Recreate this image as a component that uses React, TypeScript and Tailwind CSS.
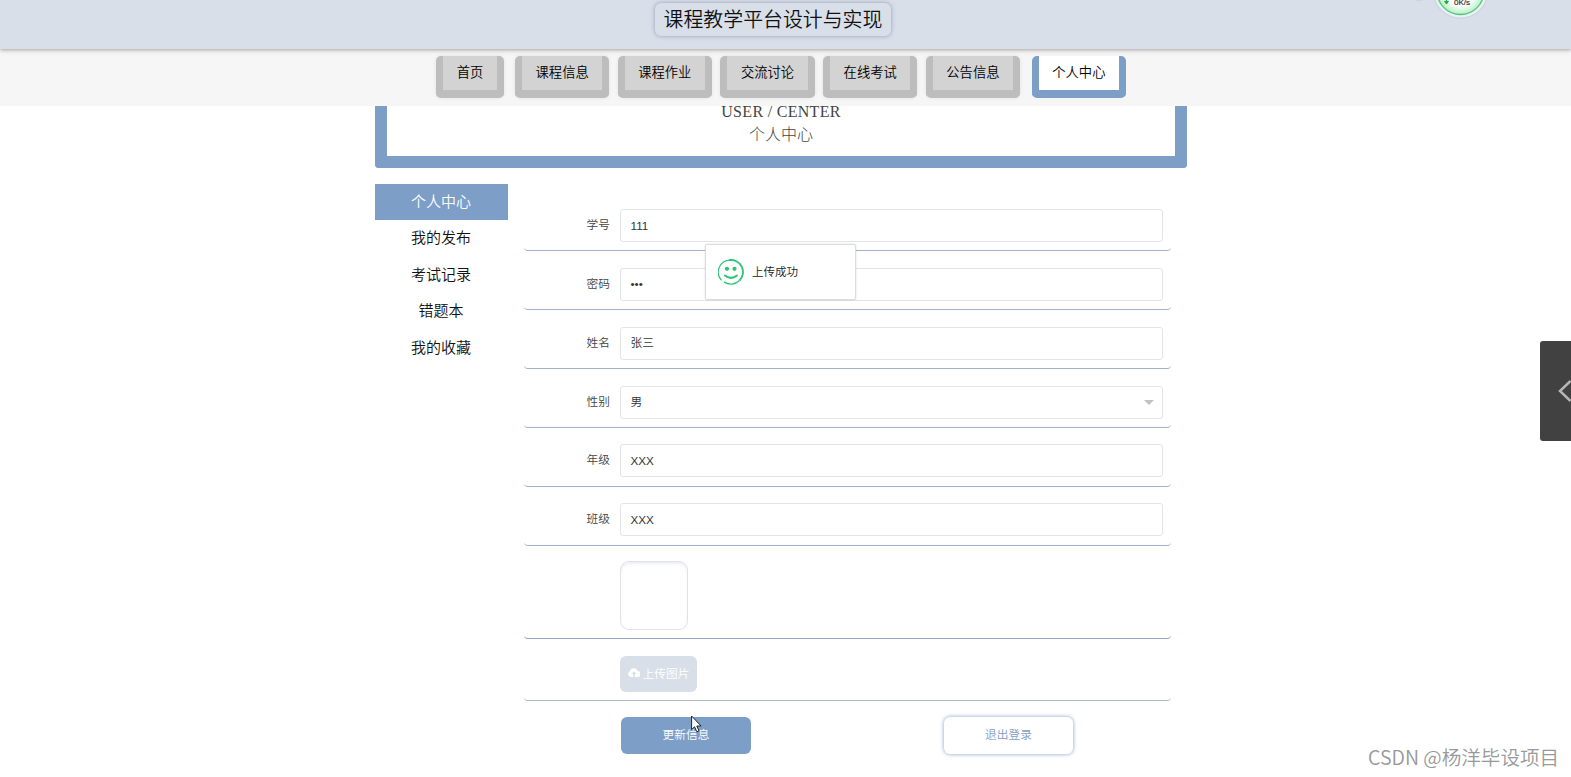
import React from 'react';

const navItems = ['课程信息', '课程作业', '交流讨论', '在线考试', '公告信息'];

const menuItems = ['我的发布', '考试记录', '错题本', '我的收藏'];

const fields = [
  { label: '学号', value: '111' },
  { label: '密码', value: '•••' },
  { label: '姓名', value: '张三' },
  { label: '性别', value: '男', select: true },
  { label: '年级', value: 'XXX' },
  { label: '班级', value: 'XXX' },
];

const Header: React.FC = () => (
  <header className="relative z-10 h-[49px] bg-[#d8dfe9] shadow-[0_1px_4px_rgba(90,70,70,0.5)] flex items-start">
    <h1 className="mt-[3px] ml-[655px] w-[236px] h-[33px] rounded-md text-center text-[19.9px] leading-[32px] font-[350] text-[#111] shadow-[0_0_4px_rgba(80,90,130,0.5)] whitespace-nowrap">
      课程教学平台设计与实现
    </h1>

    {/* Network speed ball */}
    <svg className="absolute left-[1406px] top-0" width="90" height="26" viewBox="0 0 90 26">
      <defs>
        <radialGradient id="ball" cx="0.5" cy="0.5" r="0.5">
          <stop offset="0.6" stopColor="#ffffff" />
          <stop offset="1" stopColor="#b6f0c4" />
        </radialGradient>
      </defs>
      <circle cx="13" cy="-12" r="13" fill="#cbd2de" />
      <circle cx="54.500" cy="-9" r="28" fill="#c9d0dc" opacity="0.6" />
      <circle cx="54.500" cy="-9" r="26.500" fill="#eaf0f3" />
      <circle cx="54.500" cy="-9" r="23.500" fill="url(#ball)" stroke="#4bc67c" strokeWidth="1.300" />
      <path d="M40.500 -1v4M38.500 1.300h4l-2 2.800z" fill="#22a045" stroke="#22a045" strokeWidth="0.900" />
      <text x="48" y="4.500" fontSize="8" fontFamily="Liberation Sans" fill="#333" stroke="#333" strokeWidth="0.200">0K/s</text>
    </svg>
  </header>
);

const Nav: React.FC = () => (
  <nav className="h-[57px] bg-[#f6f6f6] flex items-start pl-[436px] pt-[7px] text-[13.3px] leading-[32px] text-center text-black">
    <a className="w-[68px] h-[42px] mr-[11px] rounded-[5px] bg-[#d3d3d3] border-[#bdbdbd] border-x-7 border-b-8 shadow-[0_0_4px_rgba(0,0,0,0.08)]">首页</a>
    {navItems.map((item) => (
      <a key={item} className="w-[94.300px] h-[42px] mr-[8.400px] rounded-[5px] bg-[#d3d3d3] border-[#bdbdbd] border-x-7 border-b-8 shadow-[0_0_4px_rgba(0,0,0,0.08)]">
        {item}
      </a>
    ))}
    <a className="w-[94.300px] h-[42px] ml-[3.300px] rounded-[5px] bg-white border-[#7d9ec7] border-x-7 border-b-8">个人中心</a>
  </nav>
);

const SmileIcon: React.FC = () => (
  <svg width="26" height="26" viewBox="0 0 26 26" fill="none" stroke="#2fc476">
    <path d="M3.500 21.300A12 12 0 0 1 12 1.100" strokeWidth="1.200" />
    <path d="M11 1.200A12 12 0 0 1 21.500 21.500" strokeWidth="1.800" />
    <path d="M21.500 21.500A12 12 0 0 1 6 22.900" strokeWidth="1.300" />
    <path d="M7 16.500q6 4.800 12 0" strokeWidth="2" strokeLinecap="round" />
    <circle cx="9" cy="9.800" r="2.100" fill="#2fc476" stroke="none" />
    <circle cx="16.500" cy="9.800" r="2.100" fill="#2fc476" stroke="none" />
  </svg>
);

const App: React.FC = () => {
  return (
    <div className="relative w-[1571px] h-[777px] overflow-hidden bg-white font-['Noto_Sans_CJK_SC',sans-serif] font-[350]">
      <Header />
      <Nav />

      <main className="ml-[375px] w-[812px]">
        <div className="h-[62px] flex flex-col rounded-b-[4px] border-x-12 border-b-12 border-[#7d9ec7] text-center">
          <p className="-mt-[6px] h-[22px] leading-[24px] text-[16px] tracking-[0.3px] text-[#444] font-['Liberation_Serif',serif]">USER / CENTER</p>
          <p className="leading-[22px] text-[16px] text-[#444] font-light">个人中心</p>
        </div>

        <div className="flex">
          <ul className="mt-[16px] w-[133px] pr-px text-center text-[15px] text-[#111]">
            <li className="h-[37px] leading-[34px] -mr-px"><span className="block h-[36px] pr-px bg-[#7d9ec7] text-white">个人中心</span></li>
            {menuItems.map((item) => (
              <li key={item} className="h-[36.700px] leading-[32px]">{item}</li>
            ))}
          </ul>

          <form className="ml-4 mt-[24.500px] w-[647px] text-[11.700px] text-[#444]">
            {fields.map((field) => (
              <div key={field.label} className="h-[58.850px] pt-[16.500px] flex rounded-[4px] border-b border-[#9db3cb]">
                <label className="w-[86px] mr-[10px] text-right leading-[30px]">{field.label}</label>
                <div className="w-[543px] h-[33px] pl-[9.500px] pr-[8px] flex items-center justify-between rounded-[3px] border border-[#e3e4e8] text-[#333]">
                  <span className="font-['Liberation_Sans','Noto_Sans_CJK_SC',sans-serif] leading-[16px]">{field.value}</span>
                  {field.select && (
                    <svg width="10" height="5" viewBox="0 0 10 5" fill="#c2c2c2">
                      <path d="M0 0h10l-5 5z" />
                    </svg>
                  )}
                </div>
              </div>
            ))}

            <div className="h-[93px] pt-[15.500px] pl-[96px] rounded-[4px] border-b border-[#8fa5bf]">
              <div className="w-[68px] h-[69px] rounded-[9px] border border-[#e0e2e7] shadow-[inset_0_3px_4px_-2px_#dfe8ef]"></div>
            </div>

            <div className="h-[62px] pt-[17px] pl-[96px] rounded-[4px] border-b border-[#a9bbcd]">
              <button type="button" className="w-[77px] h-9 pb-[2px] rounded-md bg-[#d8dfe8] text-white flex items-center justify-center gap-[3px]">
                <svg width="12" height="9" viewBox="0 0 12 9">
                  <path d="M3 9A3 3 0 0 1 2 3.200 3.800 3.800 0 0 1 9.400 3 3 3 0 0 1 9.500 9z" fill="#fff" />
                  <path d="M6 3.300 8.500 6H6.800v3H5.200V6H3.500z" fill="#d8dfe8" />
                </svg>
                <span>上传图片</span>
              </button>
            </div>

            <div className="flex pt-[16px] pl-[97px]">
              <button type="button" className="w-[130px] h-[37px] pb-[2px] rounded-md bg-[#7d9ec7] text-white">更新信息</button>
              <button type="button" className="ml-[193px] w-[129px] h-[37px] pb-[2px] rounded-md bg-white text-[#7d9ec7] shadow-[0_0_4px_#7d9ec7]">退出登录</button>
            </div>
          </form>
        </div>
      </main>

      {/* Upload message */}
      <div className="absolute left-[705px] top-[244px] w-[151px] h-[56px] pl-[12px] pb-px flex items-center gap-[8px] bg-white border border-[#dcdcdc] rounded-[2px] shadow-[0_0_2px_rgba(0,0,0,0.15)] text-[11.500px] text-[#222]">
        <SmileIcon />
        <span>上传成功</span>
      </div>

      {/* Side drawer handle */}
      <div className="absolute left-[1540px] top-[341px] w-[31px] h-[100px] rounded-l-[3px] bg-[#414141]">
        <svg className="absolute left-[18px] top-[39px]" width="13" height="22" viewBox="0 0 13 22" fill="none" stroke="#b5b5b5" strokeWidth="2.500">
          <path d="M12.500 1 2 11 12.500 21" />
        </svg>
      </div>

      {/* Mouse pointer */}
      <svg className="absolute left-[691px] top-[715px]" width="12" height="18" viewBox="0 0 12 18">
        <path d="M.6 1v13.500l3-2.700 2.200 5 2.200-.9-2.200-4.900h4.300z" fill="#fff" stroke="#222" strokeWidth="1" />
      </svg>

      <div className="absolute left-[1368px] top-[743px] leading-[28px] text-[19.600px] text-[#999] whitespace-nowrap">CSDN @杨洋毕设项目</div>
    </div>
  );
};

export default App;
